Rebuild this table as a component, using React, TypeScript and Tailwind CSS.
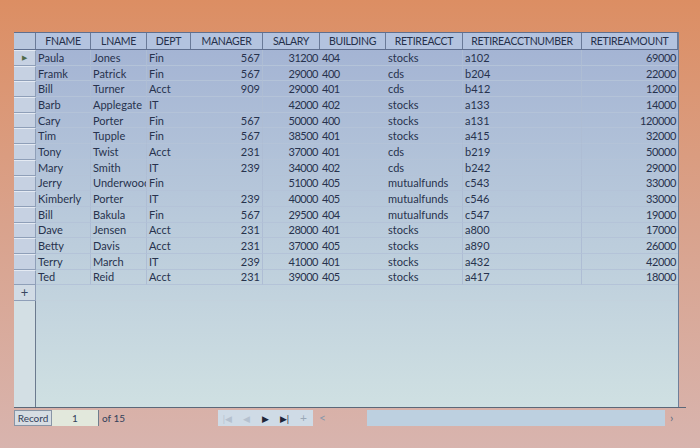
import React from "react";

// Access-style datasheet photographed off a screen.

type Row = [string, string, string, string, string, string, string, string, string];

const rows: Row[] = [
  ["Paula", "Jones", "Fin", "567", "31200", "404", "stocks", "a102", "69000"],
  ["Framk", "Patrick", "Fin", "567", "29000", "400", "cds", "b204", "22000"],
  ["Bill", "Turner", "Acct", "909", "29000", "401", "cds", "b412", "12000"],
  ["Barb", "Applegate", "IT", "", "42000", "402", "stocks", "a133", "14000"],
  ["Cary", "Porter", "Fin", "567", "50000", "400", "stocks", "a131", "120000"],
  ["Tim", "Tupple", "Fin", "567", "38500", "401", "stocks", "a415", "32000"],
  ["Tony", "Twist", "Acct", "231", "37000", "401", "cds", "b219", "50000"],
  ["Mary", "Smith", "IT", "239", "34000", "402", "cds", "b242", "29000"],
  ["Jerry", "Underwooc", "Fin", "", "51000", "405", "mutualfunds", "c543", "33000"],
  ["Kimberly", "Porter", "IT", "239", "40000", "405", "mutualfunds", "c546", "33000"],
  ["Bill", "Bakula", "Fin", "567", "29500", "404", "mutualfunds", "c547", "19000"],
  ["Dave", "Jensen", "Acct", "231", "28000", "401", "stocks", "a800", "17000"],
  ["Betty", "Davis", "Acct", "231", "37000", "405", "stocks", "a890", "26000"],
  ["Terry", "March", "IT", "239", "41000", "401", "stocks", "a432", "42000"],
  ["Ted", "Reid", "Acct", "231", "39000", "405", "stocks", "a417", "18000"],
];

const headers = ["FNAME", "LNAME", "DEPT", "MANAGER", "SALARY", "BUILDING", "RETIREACCT", "RETIREACCTNUMBER", "RETIREAMOUNT"];
const right = [false, false, false, true, true, false, false, false, true];
const cols = "grid-cols-[22px_55px_56px_44px_72px_57px_66px_77px_119px_96px]";

export default function App() {
  return (
    <div
      className="w-[700px] h-[448px] overflow-hidden bg-gradient-to-b from-[#dc8e63] via-[#d9a28c] to-[#d8b4ae] pt-[32px] pl-[14px]"
      style={{ fontFamily: "Lato, 'Liberation Sans', sans-serif" }}
    >
      <div className="w-[665px] h-[375px] flex flex-col bg-gradient-to-b from-[#a2b2d3] via-[#b9cadb] to-[#cfe0e2] border-r border-[#6f7f99]">
        {/* header */}
        <div className={`grid ${cols} h-[18px] bg-[#b3c3df] border-y border-[#5f6f8f] text-[10.5px] tracking-[-0.3px] text-[#25304a]`}>
          <div className="border-r border-[#6a7a98] bg-[#b9c7de]" />
          {headers.map((h) => (
            <div key={h} className="flex items-center justify-center border-r border-[#6a7a98] leading-none">
              {h}
            </div>
          ))}
        </div>

        {/* data rows */}
        {rows.map((r, i) => (
          <div key={i} className={`grid ${cols} h-[15.7px] text-[11px] text-[#27324d] leading-none`}>
            <div className="flex items-center justify-center bg-[#c6d1e2] border-r border-b border-[#8f9fb8] border-t border-t-[#e4eaf3]">
              {i === 0 && <span className="text-[7px] text-[#4f6a4a]">▶</span>}
            </div>
            {r.map((c, j) => (
              <div
                key={j}
                className={`flex items-center overflow-hidden whitespace-nowrap border-b border-[#b4c3d8] ${
                  j === 0 || j === 1 || j === 3 || j === 6 || j === 7 ? "border-r border-r-[#aebdd4]" : ""
                } ${right[j] ? "justify-end pr-[2px]" : "pl-[2px]"} ${j === 8 ? "tracking-[-0.4px]" : ""} ${j === 4 || j === 5 ? "tracking-[-0.5px]" : ""}`}
              >
                {c}
              </div>
            ))}
          </div>
        ))}

        {/* new record row */}
        <div className={`grid ${cols} h-[16px] text-[11px]`}>
          <div className="flex items-center justify-center bg-[#d1dbe5] border-r border-b border-[#8f9fb8] text-[#3a4660] text-[13px] leading-none">
            +
          </div>
          <div className="col-span-9 border-b border-[#c3d2dd]" />
        </div>

        {/* blank area */}
        <div className="flex-1 flex">
          <div className="w-[22px] bg-[#d3dfe4] border-r border-[#6b7a8e]" />
          <div className="flex-1" />
        </div>
      </div>
      <div className="w-[672px] h-px bg-[#5c6878]" />

      {/* status bar */}
      <div className="w-[672px] h-[18px] mt-[1px] flex items-center text-[10px] text-[#33405a] leading-none">
        <div className="w-[38px] h-[16px] flex items-center justify-center border border-[#8895a6] bg-[#d7dde3]">Record</div>
        <div className="w-[47px] h-[16px] flex items-center justify-center bg-[#e2e8dc] border-r border-[#6f7d8c]">1</div>
        <div className="w-[119px] pl-[3px]">of 15</div>
        <div className="h-[16px] flex items-center bg-[#cfdbe6] text-[9px]">
          <span className="w-[19px] text-center text-[#b5c1cf]">|◀</span>
          <span className="w-[19px] text-center text-[#b5c1cf]">◀</span>
          <span className="w-[19px] text-center text-[#1f2638]">▶</span>
          <span className="w-[19px] text-center text-[#1f2638]">▶|</span>
          <span className="w-[19px] text-center text-[#9aa8b8] text-[12px]">+</span>
        </div>
        <span className="w-[19px] text-center text-[#8a98aa] text-[12px]">&lt;</span>
        <div className="ml-[35px] h-[16px] w-[298px] bg-[#bdd0e0]" />
        <span className="ml-[5px] text-[#5f6c80] text-[12px]">›</span>
      </div>
    </div>
  );
}
